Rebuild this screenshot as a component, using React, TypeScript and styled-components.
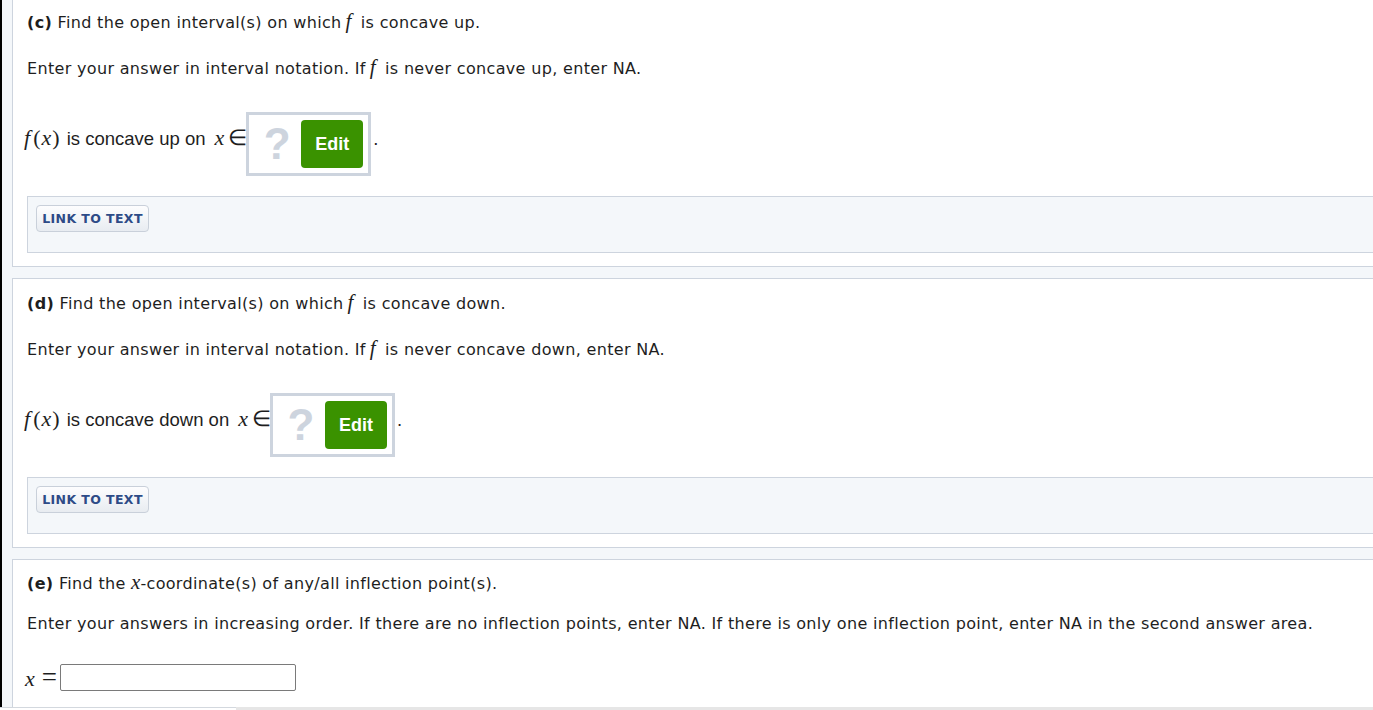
import React from "react";
import styled, { createGlobalStyle } from "styled-components";

const GlobalStyle = createGlobalStyle`
  html, body {
    margin: 0;
    padding: 0;
    height: 100%;
    overflow: hidden;
    background: #f4f7fa;
  }
  body {
    font-family: "DejaVu Sans", Verdana, sans-serif;
    color: #1e1e1e;
  }
`;

const Page = styled.div`
  border-left: 2px solid #000;
  padding-left: 10px;
  margin-top: -3px;
  min-height: calc(100vh + 3px);
  display: flex;
  flex-direction: column;
  gap: 11px;
  box-sizing: border-box;
`;

const Card = styled.section<{ $pt: number; $pb: number }>`
  background: #fff;
  border: 1px solid #cdd4de;
  border-right: none;
  margin-right: -12px;
  padding: ${(p) => p.$pt}px 0 ${(p) => p.$pb}px 14px;
`;

const Para = styled.p<{ $mt?: number }>`
  margin: ${(p) => p.$mt ?? 0}px 0 0 0;
  font-size: 16px;
  line-height: 20px;
  letter-spacing: 0.33px;
  white-space: nowrap;
`;

const Label = styled.b`
  font-weight: bold;
`;

const MathI = styled.span<{ $size?: number; $l?: number; $r?: number }>`
  font-family: "Liberation Serif", "Times New Roman", serif;
  font-style: italic;
  font-size: ${(p) => p.$size ?? 21}px;
  letter-spacing: 0;
  line-height: 0;
  margin: 0 ${(p) => p.$r ?? 0}px 0 ${(p) => p.$l ?? 0}px;
`;

const MathR = styled.span<{ $size?: number; $l?: number; $r?: number }>`
  font-family: "Liberation Serif", "Times New Roman", serif;
  font-size: ${(p) => p.$size ?? 21}px;
  letter-spacing: 0;
  line-height: 0;
  margin: 0 ${(p) => p.$r ?? 0}px 0 ${(p) => p.$l ?? 0}px;
`;

const AnswerRow = styled.div`
  margin-top: 33px;
  display: flex;
  align-items: flex-start;
  height: 64px;
`;

const Lead = styled.span`
  margin-top: 15px;
  font-family: "Liberation Sans", Arial, sans-serif;
  font-size: 18.5px;
  line-height: 24px;
  white-space: nowrap;
  display: inline-block;
`;

const LeadMath = styled.span`
  margin-left: -3px;
  margin-right: 2px;
`;

const AnswerBox = styled.span`
  display: flex;
  align-items: center;
  box-sizing: border-box;
  height: 64px;
  width: 125px;
  border: 3px solid #cdd4de;
  background: #fff;
  margin: 0 2px 0 1px;
  padding: 0 4px 0 0;
`;

const Unknown = styled.span`
  width: 52px;
  padding-left: 4px;
  box-sizing: border-box;
  text-align: center;
  font-family: "Liberation Sans", Arial, sans-serif;
  font-weight: bold;
  font-size: 44px;
  line-height: 44px;
  color: #cdd4de;
`;

const EditButton = styled.button`
  width: 62px;
  height: 48px;
  border: none;
  border-radius: 4px;
  background: #3a9200;
  color: #fff;
  font-family: "Liberation Sans", Arial, sans-serif;
  font-weight: bold;
  font-size: 18px;
  padding: 0;
  cursor: pointer;
`;

const LinkPanel = styled.div`
  margin-top: 20px;
  height: 57px;
  box-sizing: border-box;
  background: #f4f7fa;
  border: 1px solid #cdd4de;
  border-right: none;
  padding: 8px 0 0 8px;
`;

const LinkButton = styled.button`
  width: 113px;
  height: 27px;
  box-sizing: border-box;
  border: 1px solid #c9d0da;
  border-radius: 4px;
  background: linear-gradient(#fdfdfe, #e8ecf1);
  color: #2d4b87;
  font-family: "DejaVu Sans", Verdana, sans-serif;
  font-weight: bold;
  font-size: 12.5px;
  letter-spacing: 0.4px;
  padding: 0;
  cursor: pointer;
`;

const InputRow = styled.div`
  margin-top: 30px;
  display: flex;
  align-items: center;
  height: 27px;
`;

const EqLabel = styled.span`
  font-family: "Liberation Serif", "Times New Roman", serif;
  font-size: 22px;
  white-space: nowrap;
  margin-left: -2px;
  display: flex;
  align-items: baseline;
`;

const EqSign = styled.span`
  font-size: 27px;
  margin: 0 3px 0 7px;
`;

const TextInput = styled.input`
  width: 236px;
  height: 27px;
  box-sizing: border-box;
  border: 1px solid #7a7a7a;
  border-radius: 2px;
  background: #fff;
  margin: 0;
`;

const ScrollStrip = styled.div`
  position: fixed;
  left: 0;
  right: 0;
  bottom: 0;
  height: 3px;
  display: flex;
`;

const StripLeft = styled.div`
  width: 236px;
  background: #fff;
  border-top: 1px solid #d3d8de;
  box-sizing: border-box;
`;

const StripRight = styled.div`
  flex: 1;
  background: #e6e6e6;
`;

type ConcaveProps = {
  label: string;
  word: string;
};

const ConcaveCard: React.FC<ConcaveProps> = ({ label, word }) => (
  <Card $pt={15} $pb={13}>
    <Para>
      <Label>({label})</Label> Find the open interval(s) on which
      <MathI $l={4} $r={4}>f</MathI> is concave {word}.
    </Para>
    <Para $mt={26}>
      Enter your answer in interval notation. If
      <MathI $l={4} $r={4}>f</MathI> is never concave {word}, enter NA.
    </Para>
    <AnswerRow>
      <Lead>
        <LeadMath>
          <MathI $size={22} $r={3}>f</MathI>
          <MathR $size={22}>(</MathR>
          <MathI $size={22} $l={1} $r={1}>x</MathI>
          <MathR $size={22}>)</MathR>
        </LeadMath>{" "}
        is concave {word} on<MathI $size={22} $l={9}>x</MathI>
        <MathR $size={22} $l={4} $r={-2}>∈</MathR>
      </Lead>
      <AnswerBox>
        <Unknown>?</Unknown>
        <EditButton>Edit</EditButton>
      </AnswerBox>
      <Lead>.</Lead>
    </AnswerRow>
    <LinkPanel>
      <LinkButton>LINK TO TEXT</LinkButton>
    </LinkPanel>
  </Card>
);

export default function App() {
  return (
    <>
      <GlobalStyle />
      <Page>
        <ConcaveCard label="c" word="up" />
        <ConcaveCard label="d" word="down" />
        <Card $pt={14} $pb={30}>
          <Para>
            <Label>(e)</Label> Find the <MathI>x</MathI>-coordinate(s) of
            any/all inflection point(s).
          </Para>
          <Para $mt={20}>
            Enter your answers in increasing order. If there are no inflection
            points, enter NA. If there is only one inflection point, enter NA in
            the second answer area.
          </Para>
          <InputRow>
            <EqLabel>
              <i>x</i>
              <EqSign>=</EqSign>
            </EqLabel>
            <TextInput type="text" />
          </InputRow>
        </Card>
      </Page>
      <ScrollStrip>
        <StripLeft />
        <StripRight />
      </ScrollStrip>
    </>
  );
}
